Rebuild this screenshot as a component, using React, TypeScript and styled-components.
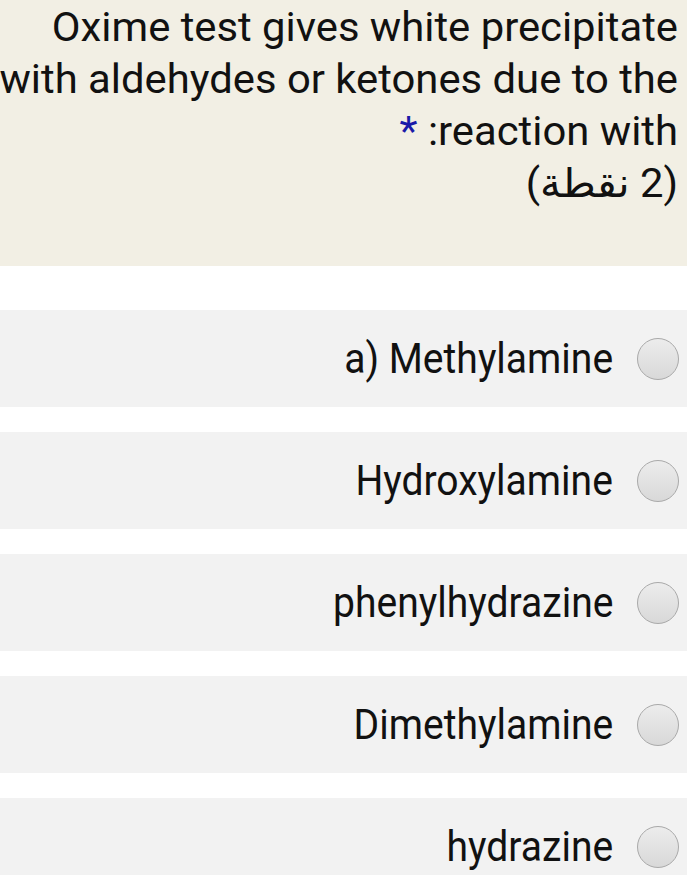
import React from "react";
import styled, { createGlobalStyle } from "styled-components";

const Global = createGlobalStyle`
  html, body { margin: 0; padding: 0; background: #ffffff; }
  body { font-family: Roboto, "Noto Sans", "DejaVu Sans", sans-serif; }
`;

const Page = styled.div`
  width: 687px;
  display: flex;
  flex-direction: column;
`;

const Header = styled.div`
  background: #f2efe4;
  height: 266px;
  box-sizing: border-box;
  padding: 2px 9px 0 0;
  text-align: right;
  color: #111;
  font-size: 40px;
  line-height: 52px;
`;

const Line = styled.div`
  white-space: nowrap;
  transform: scaleX(1.045);
  transform-origin: right center;
`;

const Star = styled.span`
  color: #1a1aa8;
`;

const Options = styled.div`
  display: flex;
  flex-direction: column;
  gap: 25px;
  margin-top: 44px;
`;

const Row = styled.div`
  background: #f2f2f2;
  height: 97px;
  display: flex;
  align-items: center;
  justify-content: flex-end;
  gap: 24px;
  padding-right: 8px;
`;

const Label = styled.span`
  font-size: 42px;
  color: #111;
  white-space: nowrap;
  transform: scaleX(0.93);
  transform-origin: right center;
`;

const Radio = styled.span`
  width: 40px;
  height: 40px;
  border-radius: 50%;
  border: 1px solid #a9a9a9;
  background: linear-gradient(#ececec, #d8d8d8);
  flex-shrink: 0;
`;

const options = [
  "a) Methylamine",
  "Hydroxylamine",
  "phenylhydrazine",
  "Dimethylamine",
  "hydrazine",
];

export default function App() {
  return (
    <Page>
      <Global />
      <Header>
        <Line>Oxime test gives white precipitate</Line>
        <Line>with aldehydes or ketones due to the</Line>
        <Line>
          <Star>*</Star> :reaction with
        </Line>
        <Line dir="rtl">(2 نقطة)</Line>
      </Header>
      <Options>
        {options.map((o) => (
          <Row key={o}>
            <Label>{o}</Label>
            <Radio />
          </Row>
        ))}
      </Options>
    </Page>
  );
}
